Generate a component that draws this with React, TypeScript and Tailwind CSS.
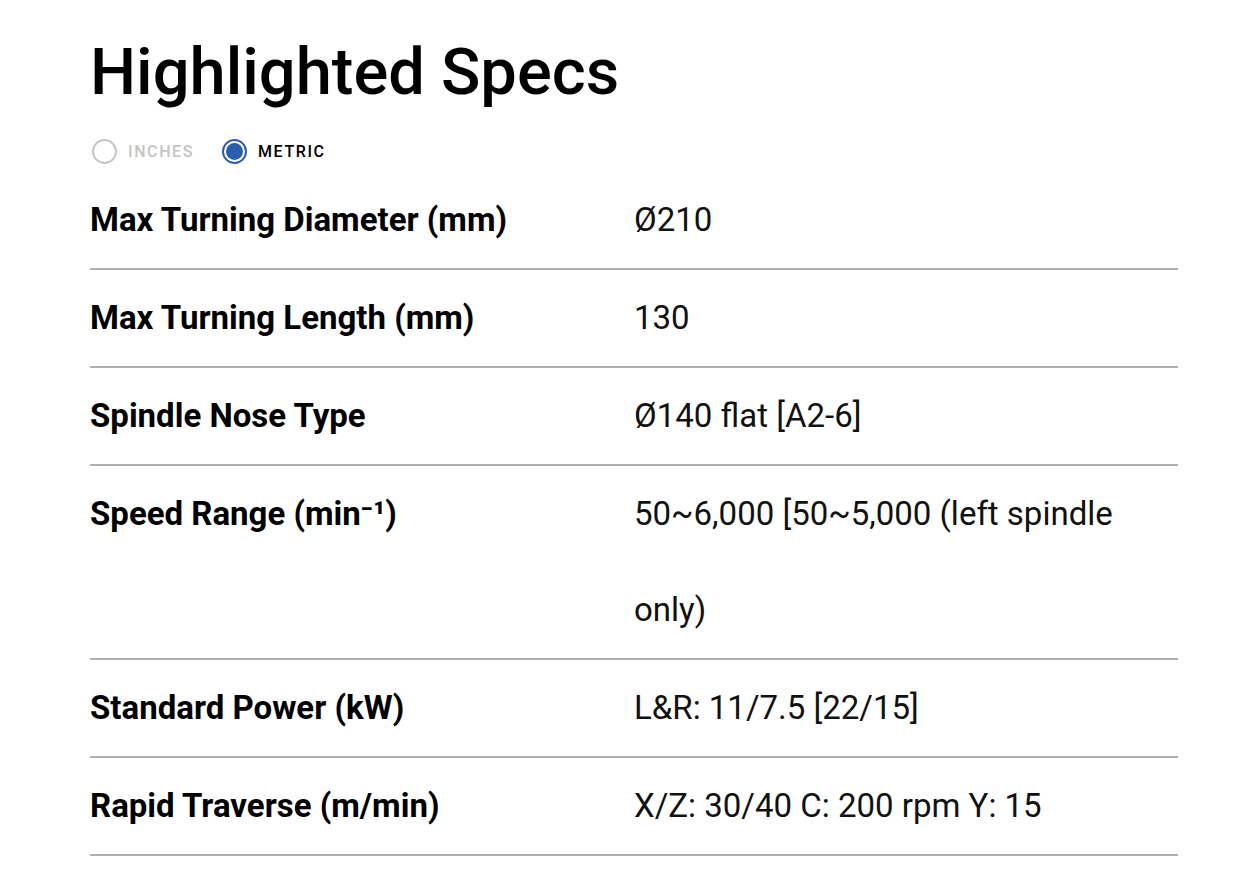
const specs: { label: string; value: string }[] = [
  { label: 'Max Turning Diameter (mm)', value: 'Ø210' },
  { label: 'Max Turning Length (mm)', value: '130' },
  { label: 'Spindle Nose Type', value: 'Ø140 flat [A2-6]' },
  { label: 'Speed Range (min⁻¹)', value: '50~6,000 [50~5,000 (left spindle only)' },
  { label: 'Standard Power (kW)', value: 'L&R: 11/7.5 [22/15]' },
  { label: 'Rapid Traverse (m/min)', value: 'X/Z: 30/40 C: 200 rpm Y: 15' },
];

function Radio({ label, checked }: { label: string; checked?: boolean }) {
  return (
    <label className="flex items-center gap-[11px]">
      <span
        className={[
          'w-[25px] h-[25px] rounded-full border-2 flex items-center justify-center',
          checked ? 'border-[#2a5db0]' : 'border-[#c4c4c4]',
        ].join(' ')}
      >
        {checked && <span className="w-[17px] h-[17px] rounded-full bg-[#2a5db0]" />}
      </span>
      <span
        className={[
          'text-[16px] font-medium tracking-[1.6px]',
          checked ? 'text-black' : 'text-[#c4c4c4]',
        ].join(' ')}
      >
        {label}
      </span>
    </label>
  );
}

export default function App() {
  return (
    <div className="min-h-screen bg-white font-['Roboto',sans-serif] text-black">
      <div className="ml-[90px] w-[1088px] pt-[34px]">
        <h1 className="text-[65px] leading-[76px] font-medium">Highlighted Specs</h1>

        <div className="flex items-center gap-[28px] mt-[29px] pl-[2px]">
          <Radio label="INCHES" />
          <Radio label="METRIC" checked />
        </div>

        <div className="mt-[8px]">
          {specs.map((s, i) => (
            <div key={i} className="grid grid-cols-2 border-b-2 border-[#b0b0b0] text-[33px] leading-[96px]">
              <div className="font-bold">{s.label}</div>
              <div className="text-[#111]">{s.value}</div>
            </div>
          ))}
        </div>
      </div>
    </div>
  );
}
